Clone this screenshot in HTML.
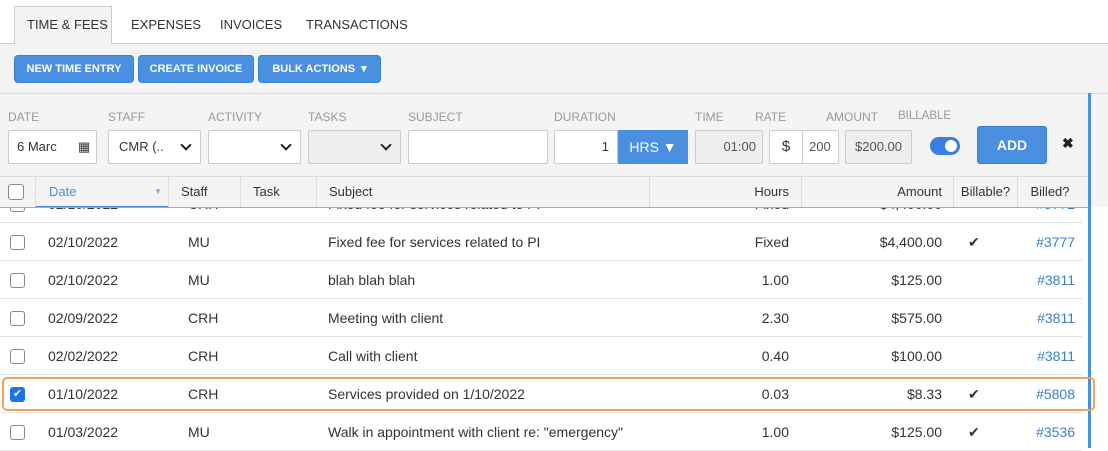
<!DOCTYPE html><html><head><style>
*{box-sizing:border-box;margin:0;padding:0}
body{width:1108px;height:448px;overflow:hidden;background:#fff;font-family:"Liberation Sans",sans-serif;font-size:14px;color:#333;position:relative}
.a{position:absolute}
.tab{position:absolute;top:17px;font-size:13px;color:#333}
.btn{position:absolute;top:55px;height:28px;background:#4a8fe0;border:1px solid #3a7fd0;border-radius:4px;color:#fff;font-size:11px;font-weight:bold;text-align:center;line-height:26px}
.lbl{position:absolute;top:110px;font-size:12px;color:#999}
.in{position:absolute;top:130px;height:34px;background:#fff;border:1px solid #ccc;border-radius:2px;font-size:13px;line-height:32px}
.dis{background:#eee}
.chev{position:absolute;right:10px;top:10px;width:8px;height:8px;border-right:2.5px solid #222;border-bottom:2.5px solid #222;transform:rotate(45deg)}
.th{position:absolute;top:177px;height:30px;line-height:30px;font-size:13px;border-left:1px solid #ddd}
.row{position:absolute;left:0;width:1082px;height:38px;border-bottom:1px solid #e3e3e3;font-size:14px}
.row span{position:absolute;top:11px}
.cb{position:absolute;left:10px;top:12px;width:15px;height:15px;border:1px solid #888;border-radius:3px;background:#fff}
.lnk{color:#3a7fcf}
</style></head><body>
<div class="a" style="left:0;top:43px;width:1108px;height:1px;background:#ccc"></div>
<div class="a" style="left:14px;top:6px;width:98px;height:38px;background:#f4f4f4;border:1px solid #ccc;border-bottom:none"></div>
<div class="a" style="left:0;top:44px;width:1108px;height:163px;background:#f4f4f4"></div>
<div class="tab" style="left:27px">TIME &amp; FEES</div>
<div class="tab" style="left:131px">EXPENSES</div>
<div class="tab" style="left:220px">INVOICES</div>
<div class="tab" style="left:306px">TRANSACTIONS</div>
<div class="btn" style="left:14px;width:120px">NEW TIME ENTRY</div>
<div class="btn" style="left:138px;width:116px">CREATE INVOICE</div>
<div class="btn" style="left:258px;width:123px">BULK ACTIONS &nbsp;▾</div>
<div class="a" style="left:0;top:93px;width:1108px;height:1px;background:#ddd"></div>
<div class="a" style="left:1088px;top:93px;width:3px;height:355px;background:#4a8fe0"></div>
<div class="lbl" style="left:8px">DATE</div><div class="lbl" style="left:108px">STAFF</div><div class="lbl" style="left:208px">ACTIVITY</div><div class="lbl" style="left:308px">TASKS</div><div class="lbl" style="left:408px">SUBJECT</div><div class="lbl" style="left:554px">DURATION</div><div class="lbl" style="left:695px">TIME</div><div class="lbl" style="left:755px">RATE</div><div class="lbl" style="left:826px">AMOUNT</div><div class="lbl" style="left:898px;top:110px;font-size:11.5px">BILLABLE</div>
<div class="in" style="left:8px;width:89px;padding-left:8px">6 Marc<span class="a" style="left:69px;top:0;font-size:13px">▦</span></div>
<div class="in" style="left:108px;width:93px;padding-left:10px">CMR (..<div class="chev"></div></div>
<div class="in" style="left:208px;width:93px"><div class="chev"></div></div>
<div class="in dis" style="left:308px;width:93px"><div class="chev"></div></div>
<div class="in" style="left:408px;width:140px"></div>
<div class="in" style="left:554px;width:64px;text-align:right;padding-right:8px">1</div>
<div class="a" style="left:618px;top:130px;width:70px;height:34px;background:#4a8fe0;color:#fff;line-height:34px;text-align:center;font-size:14px">HRS ▼</div>
<div class="in dis" style="left:695px;width:68px;text-align:right;padding-right:6px;color:#555">01:00</div>
<div class="in" style="left:769px;width:70px"><span class="a" style="left:0;width:32px;text-align:center;font-size:15px">$</span><span class="a" style="left:32px;top:0;height:32px;border-left:1px solid #ccc;padding-left:6px;width:36px;overflow:hidden;color:#555">200</span></div>
<div class="in dis" style="left:845px;width:67px;text-align:center;color:#555">$200.00</div>
<div class="a" style="left:930px;top:137px;width:30px;height:18px;border-radius:9px;background:#3a7fdf"></div>
<div class="a" style="left:945px;top:140px;width:12px;height:12px;border-radius:6px;background:#fff"></div>
<div class="a" style="left:977px;top:126px;width:70px;height:38px;background:#4a8fe0;border:1px solid #3a7fd0;border-radius:3px;color:#fff;font-weight:bold;text-align:center;line-height:36px">ADD</div>
<div class="a" style="left:1062px;top:135px;font-size:14px;font-weight:bold;color:#222">✖</div>
<div class="a" style="left:0;top:176px;width:1088px;height:1px;background:#ddd"></div>
<div class="a" style="left:8px;top:184px;width:16px;height:16px;border:1px solid #888;border-radius:3px;background:#fff"></div>
<div class="th" style="left:35px;width:133px;padding-left:13px;color:#4a8fe0;border-bottom:1px solid #4a8fe0">Date<span class="a" style="right:6px;font-size:8px;color:#7aaee8">▼</span></div>
<div class="th" style="left:168px;padding-left:12px">Staff</div>
<div class="th" style="left:240px;padding-left:12px">Task</div>
<div class="th" style="left:316px;padding-left:12px">Subject</div>
<div class="th" style="left:649px;width:152px;text-align:right;padding-right:12px">Hours</div>
<div class="th" style="left:801px;width:152px;text-align:right;padding-right:11px">Amount</div>
<div class="th" style="left:953px;width:64px;text-align:center">Billable?</div>
<div class="th" style="left:1017px;width:65px;text-align:center">Billed?</div>
<div class="a" style="left:0;top:207px;width:1088px;height:1px;background:#aaa"></div>
<div class="row" style="top:185px;height:38px;clip-path:inset(23px 0 0 0)"><div class="cb"></div><span style="left:48px">02/10/2022</span><span style="left:188px">CRH</span><span style="left:328px">Fixed fee for services related to PI</span><span style="right:293px">Fixed</span><span style="right:140px">$4,400.00</span><span class="lnk" style="right:7px">#3772</span></div>
<div class="row" style="top:223px"><div class="cb"></div><span style="left:48px">02/10/2022</span><span style="left:188px">MU</span><span style="left:328px">Fixed fee for services related to PI</span><span style="right:293px">Fixed</span><span style="right:140px">$4,400.00</span><span style="left:968px">✔</span><span class="lnk" style="right:7px">#3777</span></div>
<div class="row" style="top:261px"><div class="cb"></div><span style="left:48px">02/10/2022</span><span style="left:188px">MU</span><span style="left:328px">blah blah blah</span><span style="right:293px">1.00</span><span style="right:140px">$125.00</span><span class="lnk" style="right:7px">#3811</span></div>
<div class="row" style="top:299px"><div class="cb"></div><span style="left:48px">02/09/2022</span><span style="left:188px">CRH</span><span style="left:328px">Meeting with client</span><span style="right:293px">2.30</span><span style="right:140px">$575.00</span><span class="lnk" style="right:7px">#3811</span></div>
<div class="row" style="top:337px"><div class="cb"></div><span style="left:48px">02/02/2022</span><span style="left:188px">CRH</span><span style="left:328px">Call with client</span><span style="right:293px">0.40</span><span style="right:140px">$100.00</span><span class="lnk" style="right:7px">#3811</span></div>
<div class="row" style="top:375px"><div class="cb" style="background:#1a73e8;border-color:#1a73e8;color:#fff;font-size:11px;line-height:13px;text-align:center">✔</div><span style="left:48px">01/10/2022</span><span style="left:188px">CRH</span><span style="left:328px">Services provided on 1/10/2022</span><span style="right:293px">0.03</span><span style="right:140px">$8.33</span><span style="left:968px">✔</span><span class="lnk" style="right:7px">#5808</span></div>
<div class="row" style="top:413px"><div class="cb"></div><span style="left:48px">01/03/2022</span><span style="left:188px">MU</span><span style="left:328px">Walk in appointment with client re: "emergency"</span><span style="right:293px">1.00</span><span style="right:140px">$125.00</span><span style="left:968px">✔</span><span class="lnk" style="right:7px">#3536</span></div>
<div class="a" style="left:2px;top:377px;width:1093px;height:34px;border:2px solid #f0a060;border-radius:5px"></div>
</body></html>
